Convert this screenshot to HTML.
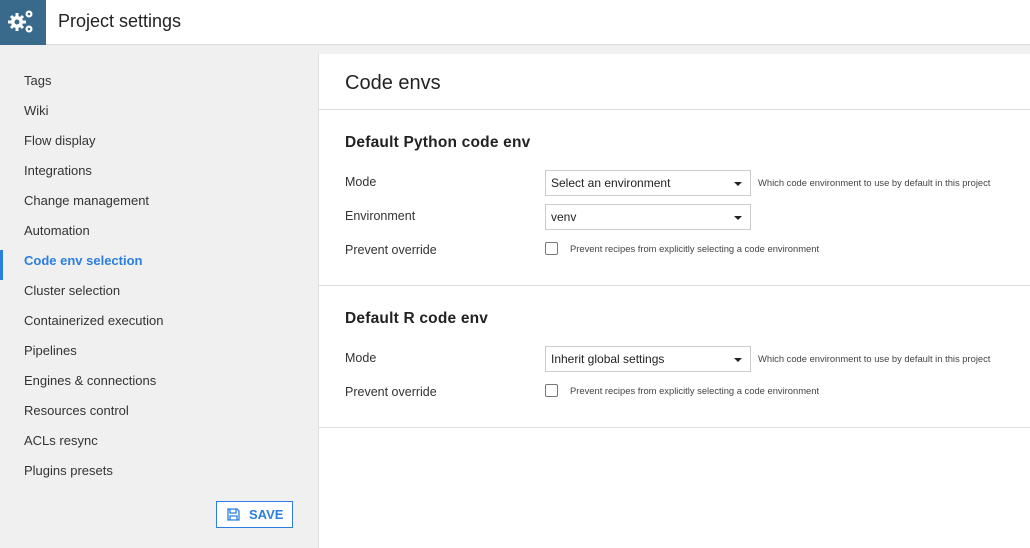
<!DOCTYPE html>
<html><head><style>
*{box-sizing:border-box;margin:0;padding:0}
body{width:1030px;height:548px;overflow:hidden;background:#f0f0f0;font-family:"Liberation Sans",sans-serif;color:#333;position:relative}
.hdr{position:absolute;left:0;top:0;width:1030px;height:45px;background:#fff;border-bottom:1px solid #ddd}
.ico{position:absolute;left:0;top:0;width:46px;height:45px;background:#3a6a8b}
.ttl{position:absolute;left:58px;top:11px;font-size:18px;color:#222}
.nav{position:absolute;left:0;top:70px;width:318px}
.nav div{height:30px;line-height:21px;padding-left:24px;font-size:13px;color:#333}
.nav .act{color:#2b7fe0;font-weight:bold;border-left:3px solid #2b7fe0;padding-left:21px}
.save{position:absolute;left:216px;top:501px;width:77px;height:27px;border:1px solid #2b7fe0;background:#fff;color:#2b7fe0;font-weight:bold;font-size:13px;line-height:25px;padding-left:32px}
.panel{position:absolute;left:318px;top:54px;width:712px;height:494px;background:#fff;border-left:1px solid #ddd}
.h1{position:absolute;left:26px;top:18px;font-size:20px;color:#222}
.line{position:absolute;left:0;width:712px;border-top:1px solid #ddd}
.h2{position:absolute;left:26px;font-size:15.5px;font-weight:bold;color:#222;letter-spacing:0.2px}
.lbl{position:absolute;left:26px;font-size:12.5px;color:#333}
.sel{position:absolute;left:226px;width:206px;height:26px;border:1px solid #ccc;font-size:12px;line-height:24px;padding-left:5px;color:#222}
.sel:after{content:"";position:absolute;right:8px;top:11px;border-left:4px solid transparent;border-right:4px solid transparent;border-top:4px solid #222}
.hint{position:absolute;left:439px;font-size:9.4px;color:#444}
.cb{position:absolute;left:226px;width:13px;height:13px;border:1px solid #777;border-radius:2px}
.cbt{position:absolute;left:251px;font-size:9.4px;color:#444}
</style></head><body>
<div class="hdr"><div class="ico"><svg width="46" height="45" viewBox="0 0 46 45"><g fill="#fff"><circle cx="17" cy="22" r="6"/><g stroke="#fff" stroke-width="3"><line x1="17" y1="13" x2="17" y2="31"/><line x1="8" y1="22" x2="26" y2="22"/><line x1="11" y1="16" x2="23" y2="28"/><line x1="23" y1="16" x2="11" y2="28"/></g><circle cx="17" cy="22" r="2.5" fill="#3a6a8b"/><circle cx="29" cy="14" r="3.5"/><circle cx="29" cy="29" r="3.5"/></g><circle cx="29" cy="14" r="1.3" fill="#3a6a8b"/><circle cx="29" cy="29" r="1.3" fill="#3a6a8b"/></svg></div><div class="ttl">Project settings</div></div>
<div class="nav">
<div>Tags</div><div>Wiki</div><div>Flow display</div><div>Integrations</div><div>Change management</div><div>Automation</div><div class="act">Code env selection</div><div>Cluster selection</div><div>Containerized execution</div><div>Pipelines</div><div>Engines &amp; connections</div><div>Resources control</div><div>ACLs resync</div><div>Plugins presets</div>
</div>
<div class="save"><svg style="position:absolute;left:10px;top:6px" width="13" height="13" viewBox="0 0 13 13"><path d="M1 1h9l2 2v9H1z M3 1v4h6V1 M3 12V8h7v4" fill="none" stroke="#2b7fe0" stroke-width="1.3"/></svg>SAVE</div>
<div class="panel">
<div class="h1">Code envs</div>
<div class="line" style="top:55px"></div>
<div class="h2" style="top:80px">Default Python code env</div>
<div class="lbl" style="top:121px">Mode</div>
<div class="sel" style="top:116px">Select an environment</div>
<div class="hint" style="top:123px">Which code environment to use by default in this project</div>
<div class="lbl" style="top:155px">Environment</div>
<div class="sel" style="top:150px">venv</div>
<div class="lbl" style="top:189px">Prevent override</div>
<div class="cb" style="top:188px"></div>
<div class="cbt" style="top:189px">Prevent recipes from explicitly selecting a code environment</div>
<div class="line" style="top:231px"></div>
<div class="h2" style="top:256px">Default R code env</div>
<div class="lbl" style="top:297px">Mode</div>
<div class="sel" style="top:292px">Inherit global settings</div>
<div class="hint" style="top:299px">Which code environment to use by default in this project</div>
<div class="lbl" style="top:331px">Prevent override</div>
<div class="cb" style="top:330px"></div>
<div class="cbt" style="top:331px">Prevent recipes from explicitly selecting a code environment</div>
<div class="line" style="top:373px"></div>
</div>
</body></html>
